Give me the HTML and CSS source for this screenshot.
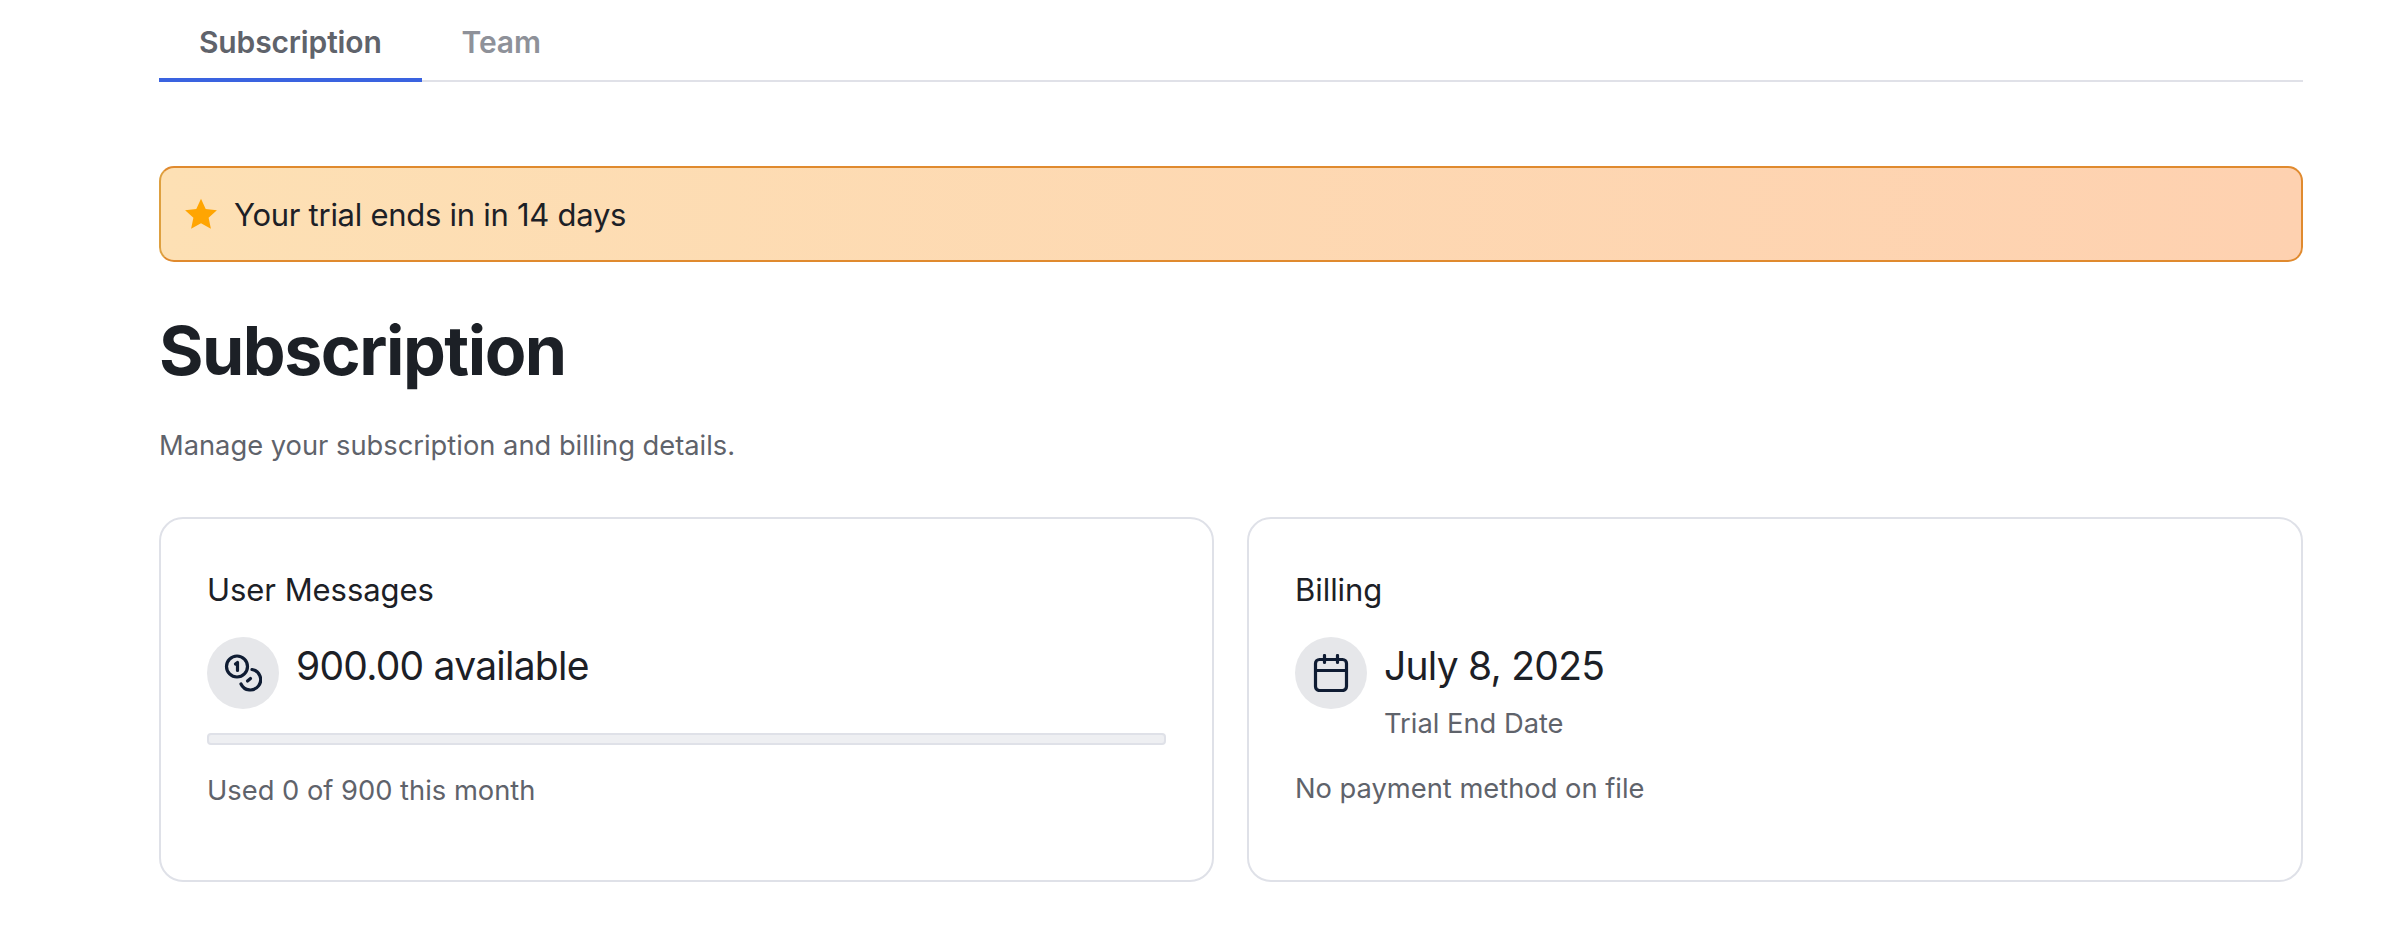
FILE: index.html
```html
<!DOCTYPE html>
<html lang="en">
<head>
    <meta charset="UTF-8">
    <title>Subscription</title>
    <link rel="stylesheet" href="styles.css">
</head>
<body>
<div class="page">
    <div class="tabs">
        <div class="tab tab-active">Subscription</div>
        <div class="tab">Team</div>
    </div>

    <div class="banner">
        <svg class="star" viewBox="0 0 32 32"><path d="M16 .8l4.700 10.300 11.200 1.200-8.300 7.500 2.300 11L16 25.200 6.100 30.800l2.300-11-8.300-7.500 11.200-1.200z"/></svg>
        <span>Your trial ends in in 14 days</span>
    </div>

    <h1>Subscription</h1>
    <p class="intro">Manage your subscription and billing details.</p>

    <div class="cards">
        <div class="card">
            <h2>User Messages</h2>
            <div class="stat">
                <div class="circle">
                    <svg viewBox="0 0 38 38" fill="none" stroke="#0f1c33" stroke-width="3.200" stroke-linecap="round" stroke-linejoin="round">
                        <circle cx="13" cy="12.500" r="10.500"/>
                        <path d="M11.500 10l2-1.500v8"/>
                        <path d="M28 15.500a10.300 10.300 0 1 1-11 14.500"/>
                        <path d="M23.500 27l3-2.500"/>
                    </svg>
                </div>
                <div class="value">900.00 available</div>
            </div>
            <div class="bar"></div>
            <p class="note">Used 0 of 900 this month</p>
        </div>
        <div class="card">
            <h2>Billing</h2>
            <div class="stat">
                <div class="circle">
                    <svg viewBox="0 0 38 38" fill="none" stroke="#0f1c33" stroke-width="3.200" stroke-linecap="round" stroke-linejoin="round">
                        <rect x="3.500" y="5.500" width="31" height="31" rx="4"/>
                        <path d="M3.500 16.500h31M12.500 1.500v7M25.500 1.500v7"/>
                    </svg>
                </div>
                <div>
                    <div class="value">July 8, 2025</div>
                    <div class="label">Trial End Date</div>
                </div>
            </div>
            <p class="note note-billing">No payment method on file</p>
        </div>
    </div>
</div>
</body>
</html>
```

FILE: styles.css
```css
* { margin: 0; padding: 0; box-sizing: border-box; }
html, body {
    width: 100%;
    height: 100%;
    background: #ffffff;
    overflow: hidden;
}
body {
    font-family: Inter, "Liberation Sans", sans-serif;
    color: #1c2026;
}
.page {
    padding: 0 99px 0 159px;
}

/* Tabs */
.tabs {
    display: flex;
    height: 82px;
    border-bottom: 2px solid #e0e1e8;
}
.tab {
    height: 82px;
    padding: 23px 40px 0;
    font-size: 30px;
    line-height: 38px;
    letter-spacing: -0.15px;
    font-weight: 600;
    color: #8e9199;
}
.tab-active {
    color: #5f636b;
    border-bottom: 4px solid #3a63e0;
}

/* Banner */
.banner {
    display: flex;
    align-items: center;
    gap: 17px;
    height: 96px;
    margin-top: 84px;
    padding: 0 24px;
    border: 2px solid #e08a2e;
    border-left-color: #dea040;
    border-radius: 15px;
    background: linear-gradient(90deg, #fde0b4, #fed1b0);
    font-size: 31px;
    letter-spacing: -0.27px;
}
.star {
    width: 32px;
    height: 32px;
    fill: #ffa502;
}

/* Heading */
h1 {
    margin-top: 46px;
    font-size: 68px;
    line-height: 84px;
    letter-spacing: -1.5px;
    font-weight: 700;
}
.intro {
    margin-top: 36px;
    font-size: 27.3px;
    line-height: 36px;
    color: #5f636b;
}

/* Cards */
.cards {
    display: grid;
    grid-template-columns: 1055px 1fr;
    gap: 33px;
    margin-top: 53px;
}
.card {
    height: 365px;
    padding: 46px;
    border: 2px solid #dfe1e8;
    border-radius: 24px;
}
.card h2 {
    padding-top: 5px;
    font-size: 31px;
    line-height: 40px;
    letter-spacing: -0.05px;
    font-weight: 400;
}
.stat {
    display: flex;
    gap: 17px;
    margin-top: 27px;
}
.circle {
    display: flex;
    align-items: center;
    justify-content: center;
    flex: none;
    width: 72px;
    height: 72px;
    border-radius: 50%;
    background: #e6e7ea;
}
.circle svg {
    width: 38px;
    height: 38px;
}
.value {
    padding-top: 4px;
    font-size: 39px;
    line-height: 50px;
    letter-spacing: -0.75px;
    font-weight: 400;
}
.label {
    margin-top: 15px;
    font-size: 27.3px;
    line-height: 36px;
    color: #5f636b;
}
.bar {
    height: 12px;
    margin-top: 24px;
    border: 2px solid #dfe1e8;
    border-radius: 4px;
    background: #eeeff2;
}
.note {
    margin-top: 28px;
    font-size: 27.3px;
    line-height: 36px;
    color: #5f636b;
}
.note-billing {
    margin-top: 29px;
}
```
